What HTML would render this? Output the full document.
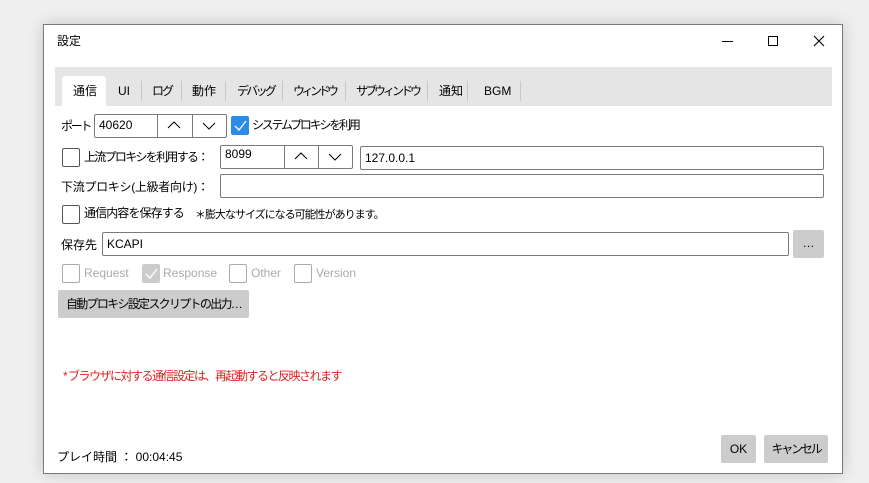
<!DOCTYPE html>
<html><head><meta charset="utf-8"><style>
*{box-sizing:border-box;margin:0;padding:0}
body{width:869px;height:483px;background:#efefef;position:relative;overflow:hidden;font-family:"Liberation Sans","Noto Sans CJK JP",sans-serif;font-size:12px;color:#000}
.a{position:absolute}
.win{left:43px;top:24px;width:800px;height:450px;background:#fff;border:1px solid #7a7a7a;box-shadow:0 0 14px rgba(0,0,0,.18)}
.t{position:absolute;white-space:nowrap;line-height:14px}
.inp{position:absolute;border:1px solid #7a7a7a;border-radius:2px;background:#fff;padding:3px 4px 0;font-size:12px}
.cb{position:absolute;width:18px;height:19px;border:1px solid #555;border-radius:2px;background:#fff}
.dcb{position:absolute;width:18px;height:19px;border:1px solid #aaa;border-radius:2px;background:#fff}
.g{position:absolute;background:#ccc;border-radius:2px;text-align:center;white-space:nowrap}
.sep{position:absolute;top:81px;width:1px;height:20px;background:#c8c8c8}
.dis{color:#aaa}
</style></head><body>
<div class="a win"></div>
<div class="t" style="left:57px;top:34px">設定</div>
<div class="a" style="left:722px;top:41px;width:11px;height:1px;background:#000"></div>
<div class="a" style="left:768px;top:36px;width:10px;height:10px;border:1px solid #000"></div>
<svg class="a" style="left:813px;top:35px" width="12" height="12"><path d="M1 1L11 11M11 1L1 11" stroke="#000" stroke-width="1.1"/></svg>

<div class="a" style="left:55px;top:67px;width:777px;height:39px;background:#e5e5e5"></div>
<div class="a" style="left:62px;top:76px;width:44px;height:30px;background:#fff;border-radius:3px 3px 0 0"></div>
<div class="t" style="left:73px;top:84px">通信</div>
<div class="t" style="left:118px;top:84px">UI</div>
<div class="t" style="left:152px;top:84px;letter-spacing:-2px">ログ</div>
<div class="t" style="left:192px;top:84px">動作</div>
<div class="t" style="left:237px;top:84px;letter-spacing:-2.7px">デバッグ</div>
<div class="t" style="left:293px;top:84px;letter-spacing:-3.5px">ウィンドウ</div>
<div class="t" style="left:356px;top:84px;letter-spacing:-3px">サブウィンドウ</div>
<div class="t" style="left:439px;top:84px">通知</div>
<div class="t" style="left:484px;top:84px">BGM</div>
<div class="sep" style="left:141px"></div><div class="sep" style="left:181px"></div><div class="sep" style="left:225px"></div><div class="sep" style="left:282px"></div><div class="sep" style="left:345px"></div><div class="sep" style="left:427px"></div><div class="sep" style="left:467px"></div><div class="sep" style="left:520px"></div>

<div class="t" style="left:61px;top:119px;letter-spacing:-2.3px">ポート</div>
<div class="inp" style="left:94px;top:114px;width:133px;height:24px">40620</div>
<div class="a" style="left:157px;top:115px;width:1px;height:22px;background:#7a7a7a"></div>
<div class="a" style="left:192px;top:115px;width:1px;height:22px;background:#7a7a7a"></div>
<svg class="a" style="left:167px;top:121px" width="14" height="8"><path d="M1 7L7 1L13 7" fill="none" stroke="#000"/></svg>
<svg class="a" style="left:202px;top:122px" width="14" height="8"><path d="M1 1L7 7L13 1" fill="none" stroke="#000"/></svg>
<div class="a" style="left:231px;top:116px;width:18px;height:19px;background:#2b8ce8;border-radius:2px"></div>
<svg class="a" style="left:231px;top:116px" width="18" height="19"><path d="M4 10L8 14L15 5" fill="none" stroke="#fff" stroke-width="1.3"/></svg>
<div class="t" style="left:252px;top:118px;letter-spacing:-2.2px">システムプロキシを利用</div>

<div class="cb" style="left:62px;top:148px"></div>
<div class="t" style="left:84px;top:150px;letter-spacing:-1.7px">上流プロキシを利用する：</div>
<div class="inp" style="left:220px;top:145px;width:133px;height:24px;padding-top:1px">8099</div>
<div class="a" style="left:284px;top:146px;width:1px;height:22px;background:#7a7a7a"></div>
<div class="a" style="left:318px;top:146px;width:1px;height:22px;background:#7a7a7a"></div>
<svg class="a" style="left:294px;top:152px" width="14" height="8"><path d="M1 7L7 1L13 7" fill="none" stroke="#000"/></svg>
<svg class="a" style="left:328px;top:153px" width="14" height="8"><path d="M1 1L7 7L13 1" fill="none" stroke="#000"/></svg>
<div class="inp" style="left:360px;top:146px;width:464px;height:24px;padding-top:4px">127.0.0.1</div>

<div class="t" style="left:61px;top:180px;letter-spacing:-0.3px">下流プロキシ(上級者向け)：</div>
<div class="inp" style="left:220px;top:174px;width:604px;height:24px"></div>

<div class="cb" style="left:62px;top:205px"></div>
<div class="t" style="left:84px;top:206px;letter-spacing:-0.9px">通信内容を保存する</div>
<div class="t" style="left:195px;top:208px;font-size:11px;letter-spacing:-1px">＊膨大なサイズになる可能性があります。</div>

<div class="t" style="left:61px;top:238px">保存先</div>
<div class="inp" style="left:102px;top:232px;width:687px;height:24px;padding-top:4px">KCAPI</div>
<div class="g" style="left:793px;top:230px;width:31px;height:28px;line-height:26px">…</div>

<div class="dcb" style="left:62px;top:264px"></div><div class="t dis" style="left:84px;top:266px">Request</div>
<div class="a" style="left:142px;top:264px;width:18px;height:19px;background:#ccc;border-radius:2px"></div>
<svg class="a" style="left:142px;top:264px" width="18" height="19"><path d="M4 10L8 14L15 5" fill="none" stroke="#fff" stroke-width="1.3"/></svg>
<div class="t dis" style="left:163px;top:266px">Response</div>
<div class="dcb" style="left:229px;top:264px"></div><div class="t dis" style="left:251px;top:266px">Other</div>
<div class="dcb" style="left:294px;top:264px"></div><div class="t dis" style="left:316px;top:266px">Version</div>

<div class="g" style="left:58px;top:290px;width:191px;height:28px;line-height:28px;letter-spacing:-1.7px">自動プロキシ設定スクリプトの出力…</div>

<div class="t" style="left:63px;top:369px;color:#e02020;letter-spacing:-1.5px">* ブラウザに対する通信設定は、再起動すると反映されます</div>

<div class="t" style="left:57px;top:450px">プレイ時間 ： 00:04:45</div>
<div class="g" style="left:721px;top:435px;width:35px;height:28px;line-height:28px">OK</div>
<div class="g" style="left:764px;top:435px;width:64px;height:28px;line-height:28px;letter-spacing:-2.2px">キャンセル</div>
</body></html>
